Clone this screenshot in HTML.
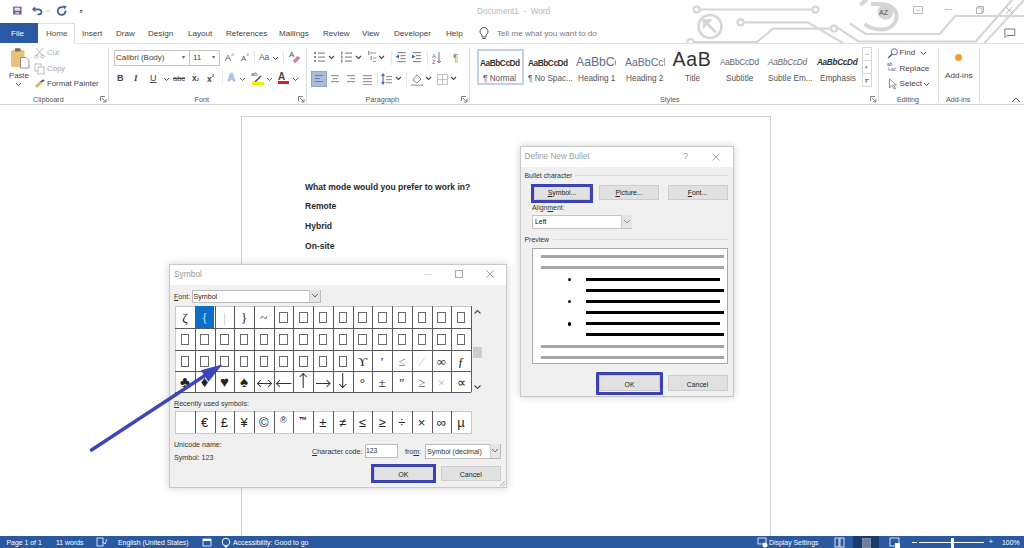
<!DOCTYPE html>
<html><head><meta charset="utf-8">
<style>
*{margin:0;padding:0;box-sizing:border-box}
html,body{width:1024px;height:548px;overflow:hidden;background:#fff;font-family:"Liberation Sans",sans-serif;color:#444}
.a{position:absolute}
.t{position:absolute;white-space:nowrap;line-height:1}
#title{left:0;top:0;width:1024px;height:43px;background:#fff}
#ribbon{left:0;top:43px;width:1024px;height:62px;background:#fff;border-top:1px solid #e1e1e1;border-bottom:1px solid #d6d6d6}
.tab{font-size:8.1px;color:#444;top:29.6px}
.sep{position:absolute;top:48px;width:1px;height:54px;background:#dcdcdc}
.gl{font-size:7.2px;color:#555;top:95.5px}
.status{left:0;top:536px;width:1024px;height:12px;background:#2b59a0}
.st{font-size:6.9px;color:#fff;top:540.2px}
.dlg{position:absolute;background:#f0f0f0;border:1px solid #c9c9c9;box-shadow:0 0 8px rgba(0,0,0,.18)}
.dtitle{position:absolute;left:0;top:0;right:0;background:#fff}
.btn{position:absolute;background:#e1e1e1;border:1px solid #cdcdcd;font-size:7.4px;color:#222;text-align:center}
.hl{position:absolute;border:3px solid #3b43b5}
.grid{position:absolute;border-collapse:collapse;background:#fff}
.grid td{border:1px solid #555;width:19.73px;text-align:center;font-family:"Liberation Serif",serif;color:#111;padding:0}
</style></head><body>

<!-- TITLE BAR -->
<div id="title" class="a">
<svg class="a" style="left:0;top:0" width="1024" height="43">
 <g fill="none" stroke="#d6d6d6" stroke-width="2.2">
  <line x1="700" y1="9.5" x2="812" y2="9.5"/>
  <circle cx="696.7" cy="9.5" r="3" fill="#fff"/>
  <circle cx="815.4" cy="9.7" r="3" fill="#fff"/>
  <circle cx="710" cy="26.5" r="11.5" stroke-width="2.6"/>
  <path d="M704 20.5 L716 32.5" stroke-width="2.6"/>
  <path d="M703.5 27.5 L703.5 20 L711 20 Z" fill="#d6d6d6" stroke-width="1.5"/>
  <path d="M744 22.4 L807.6 22.4 L843 43"/>
  <circle cx="740.5" cy="22.4" r="3" fill="#fff"/>
  <path d="M693.5 42 L757 42 L773 28.6 L831 28.6"/>
  <circle cx="690.5" cy="42" r="3" fill="#fff"/>
  <path d="M837 28.6 L839 28.6 L858.5 41.5 L975.8 41.5 L1012 0"/>
  <path d="M984.5 43 L1024 0"/>
  <path d="M849.8 23.5 L865.6 34 L939.6 34 L955.3 16 L1024 16"/>
  <path d="M871 4 L880 4 C890 4, 896.5 9, 896.5 16 C 896.5 24, 890 29.5, 881 29.5 C 875 29.5, 869 27.5, 864.5 24" stroke-width="4"/>
  <path d="M860.3 5 L867.3 -1" stroke-width="4"/>
 </g>
 <circle cx="834" cy="28.6" r="3" fill="#fff" stroke="#d6d6d6" stroke-width="2.2"/>
 <circle cx="885.5" cy="12" r="7.8" fill="#d4d4d4"/>
</svg>
<div class="t" style="left:879px;top:8.5px;font-size:7.2px;color:#555">AZ</div>
<div class="t" style="left:477px;top:8px;font-size:8.2px;color:#b8b8b8">Document1 &nbsp;-&nbsp; Word</div>
<!-- qat -->
<svg class="a" style="left:0;top:0" width="90" height="22">
 <rect x="13.2" y="6.6" width="8.3" height="7.9" fill="#6d5480"/>
 <rect x="14.6" y="7.6" width="5.6" height="3.2" fill="#e8e0ee"/>
 <rect x="15.2" y="12.2" width="4" height="1.4" fill="#e8e0ee"/>
 <path d="M33.5 9.3 L38 9.3 C40.6 9.3 41.5 11 41.5 12 C41.5 13.4 40.5 14.4 39 14.4 L37.5 14.4" fill="none" stroke="#46628a" stroke-width="1.7"/>
 <path d="M32 9.3 L35.3 6.3 L35.3 12.3 Z" fill="#46628a"/>
 <path d="M46 10 L48 11.5 L50 10" fill="none" stroke="#c8c8c8" stroke-width="0.9"/>
 <path d="M63.5 7.6 A3.9 3.9 0 1 0 65.5 10.5" fill="none" stroke="#46628a" stroke-width="1.8"/>
 <path d="M62.5 5.6 L66.5 6 L64.8 9.6 Z" fill="#46628a"/>
 <rect x="79.8" y="10" width="2.6" height="0.9" fill="#444"/>
 <rect x="79.8" y="11.6" width="2.6" height="0.9" fill="#444"/>
</svg>
<!-- window controls -->
<svg class="a" style="left:900px;top:0" width="124" height="43">
 <rect x="13.5" y="6.5" width="9" height="7" fill="none" stroke="#bbb" stroke-width="1"/>
 <path d="M16 9.5 L18 11 L20 9.5" fill="none" stroke="#bbb" stroke-width="0.9"/>
 <line x1="45" y1="9.5" x2="52.5" y2="9.5" stroke="#c8c8c8" stroke-width="1"/>
 <rect x="76.5" y="8" width="5.5" height="5.5" fill="none" stroke="#aaa" stroke-width="0.9"/>
 <path d="M78 8 L78 6.5 L83.5 6.5 L83.5 12 L82 12" fill="none" stroke="#aaa" stroke-width="0.9"/>
 <path d="M106 7 L112.5 13.5 M112.5 7 L106 13.5" stroke="#aaa" stroke-width="0.9"/>
 <path d="M104.8 29 L114.8 29 L114.8 35.5 L107 35.5 L105 37.5 Z" fill="none" stroke="#777" stroke-width="1"/>
</svg>
<!-- tabs -->
<div class="a" style="left:0;top:23px;width:38px;height:19.5px;background:#2b59a3"></div>
<div class="t tab" style="left:11px;color:#fff">File</div>
<div class="a" style="left:38px;top:23px;width:37px;height:21px;background:#fff;border:1px solid #e0e0e0;border-left:none;border-bottom:none"></div>
<div class="t tab" style="left:46px;color:#505050">Home</div>
<div class="t tab" style="left:82px">Insert</div>
<div class="t tab" style="left:116px">Draw</div>
<div class="t tab" style="left:148px">Design</div>
<div class="t tab" style="left:188px">Layout</div>
<div class="t tab" style="left:226px">References</div>
<div class="t tab" style="left:279px">Mailings</div>
<div class="t tab" style="left:323px">Review</div>
<div class="t tab" style="left:362px">View</div>
<div class="t tab" style="left:394px">Developer</div>
<div class="t tab" style="left:446px">Help</div>
<svg class="a" style="left:479px;top:26px" width="12" height="14"><path d="M3 9 A4 4 0 1 1 7 9 L7 11 L3 11 Z" fill="none" stroke="#555" stroke-width="1"/><line x1="3.5" y1="12.5" x2="6.5" y2="12.5" stroke="#555"/></svg>
<div class="t tab" style="left:497px;color:#777">Tell me what you want to do</div>
</div>

<!-- RIBBON -->
<div id="ribbon" class="a"></div>

<!-- RIBBON CONTENT -->
<div class="a" style="left:0;top:43px;width:74px;height:1px;background:#fff"></div>
<!-- Clipboard -->
<svg class="a" style="left:8px;top:47px" width="24" height="24">
 <rect x="3" y="3" width="13.5" height="17" rx="1" fill="#e9c27a"/>
 <rect x="7" y="1.3" width="5.5" height="3.2" rx="1" fill="#7a6a5a"/>
 <path d="M12.5 10.5 L18 10.5 L21 13.5 L21 21 L12.5 21 Z" fill="#fff" stroke="#888" stroke-width="0.9"/>
</svg>
<div class="t" style="left:9px;top:71.5px;font-size:7.7px;color:#444">Paste</div>
<svg class="a" style="left:15px;top:82px" width="8" height="5"><path d="M1 1 L3.5 3.5 L6 1" fill="none" stroke="#555" stroke-width="1"/></svg>
<svg class="a" style="left:34px;top:47px" width="12" height="12"><path d="M2 1 L9 9 M9 1 L2 9" stroke="#bbb" stroke-width="1"/><circle cx="2.5" cy="9.5" r="1.6" fill="none" stroke="#bbb"/><circle cx="8.5" cy="9.5" r="1.6" fill="none" stroke="#bbb"/></svg>
<div class="t" style="left:47px;top:49.3px;font-size:7.8px;color:#aaa">Cut</div>
<svg class="a" style="left:34px;top:63px" width="12" height="12"><rect x="1" y="1" width="6" height="7" fill="none" stroke="#bbb"/><rect x="4" y="4" width="6" height="7" fill="#fff" stroke="#bbb"/></svg>
<div class="t" style="left:47px;top:65.3px;font-size:7.8px;color:#aaa">Copy</div>
<svg class="a" style="left:35px;top:79px" width="11" height="10"><path d="M1 8 L6 3" stroke="#d8b56a" stroke-width="3"/><path d="M6 3 L9 1" stroke="#555" stroke-width="2"/></svg>
<div class="t" style="left:47px;top:80.3px;font-size:7.8px;color:#444">Format Painter</div>
<div class="t gl" style="left:33px">Clipboard</div>
<svg class="a" style="left:100px;top:96px" width="7" height="7"><path d="M0.5 5 L0.5 0.5 L5 0.5 M2 2 L6 6 M6 3 L6 6 L3 6" fill="none" stroke="#777" stroke-width="0.9"/></svg>
<div class="sep" style="left:108px"></div>

<!-- Font -->
<div class="a" style="left:114px;top:50px;width:76px;height:16px;border:1px solid #c6c6c6;background:#fff"></div>
<div class="t" style="left:116px;top:54.2px;font-size:8px;color:#444">Calibri (Body)</div>
<div class="t" style="left:182px;top:54px;font-size:6px;color:#666">▾</div>
<div class="a" style="left:189px;top:50px;width:31px;height:16px;border:1px solid #c6c6c6;background:#fff"></div>
<div class="t" style="left:193px;top:54.2px;font-size:8px;color:#444">11</div>
<div class="t" style="left:212px;top:54px;font-size:6px;color:#666">▾</div>
<div class="t" style="left:225px;top:53px;font-size:9px;color:#555">A<span style="font-size:5px;vertical-align:4px">˄</span></div>
<div class="t" style="left:241px;top:53px;font-size:8px;color:#555">A<span style="font-size:5px;vertical-align:4px">˅</span></div>
<div class="t" style="left:259px;top:53px;font-size:8.4px;color:#555">Aa</div>
<svg class="a" style="left:272px;top:56px" width="7" height="5"><path d="M1 1 L3.5 3.5 L6 1" fill="none" stroke="#555" stroke-width="1"/></svg>
<div class="t" style="left:289px;top:51px;font-size:8px;color:#555">A</div>
<svg class="a" style="left:292px;top:55px" width="10" height="9"><path d="M2 7 L7 2" stroke="#e07a9a" stroke-width="3.5"/></svg>
<div class="t" style="left:117px;top:73.5px;font-size:9px;font-weight:bold;color:#444">B</div>
<div class="t" style="left:134px;top:73.5px;font-size:9px;font-style:italic;font-weight:bold;color:#444;font-family:'Liberation Serif',serif">I</div>
<div class="t" style="left:150px;top:73.5px;font-size:9px;color:#444;text-decoration:underline">U</div>
<svg class="a" style="left:163px;top:77px" width="7" height="5"><path d="M1 1 L3.5 3.5 L6 1" fill="none" stroke="#555" stroke-width="1"/></svg>
<div class="t" style="left:173px;top:75px;font-size:7.5px;color:#444;text-decoration:line-through">abc</div>
<div class="t" style="left:192px;top:74px;font-size:8.5px;font-weight:bold;color:#444">x<span style="font-size:4px">2</span></div>
<div class="t" style="left:207px;top:74px;font-size:8.5px;font-weight:bold;color:#444">x<span style="font-size:4px;vertical-align:5px">2</span></div>
<div class="a" style="left:221.5px;top:71px;width:1px;height:14px;background:#eeeeee"></div><div class="a" style="left:254px;top:51px;width:1px;height:14px;background:#e6e6e6"></div><div class="a" style="left:283px;top:51px;width:1px;height:14px;background:#e6e6e6"></div>
<div class="t" style="left:227.5px;top:72px;font-size:10.5px;color:#e4eef8;-webkit-text-stroke:0.7px #7aa6d6;font-weight:bold">A</div>
<svg class="a" style="left:239px;top:77px" width="7" height="5"><path d="M1 1 L3.5 3.5 L6 1" fill="none" stroke="#555" stroke-width="1"/></svg>
<div class="t" style="left:251px;top:71px;font-size:6px;color:#555">ab</div>
<svg class="a" style="left:251px;top:74px" width="14" height="12"><path d="M4 8 L10 2" stroke="#555" stroke-width="1.6"/><rect x="1" y="8" width="12" height="3" fill="#f2f200"/></svg>
<svg class="a" style="left:266px;top:77px" width="7" height="5"><path d="M1 1 L3.5 3.5 L6 1" fill="none" stroke="#555" stroke-width="1"/></svg>
<div class="t" style="left:278px;top:72px;font-size:10px;color:#444;font-weight:bold">A</div>
<div class="a" style="left:278px;top:81px;width:11px;height:2.5px;background:#d42020"></div>
<svg class="a" style="left:292px;top:77px" width="7" height="5"><path d="M1 1 L3.5 3.5 L6 1" fill="none" stroke="#555" stroke-width="1"/></svg>
<div class="t gl" style="left:194.5px">Font</div>
<svg class="a" style="left:298px;top:96px" width="7" height="7"><path d="M0.5 5 L0.5 0.5 L5 0.5 M2 2 L6 6 M6 3 L6 6 L3 6" fill="none" stroke="#777" stroke-width="0.9"/></svg>
<div class="sep" style="left:306px"></div>

<!-- Paragraph -->
<svg class="a" style="left:312px;top:50px" width="160" height="40">
 <g fill="#8a8a8a">
  <rect x="2" y="2" width="2" height="2"/><rect x="2" y="6" width="2" height="2"/><rect x="2" y="10" width="2" height="2"/>
  <rect x="6" y="2.5" width="7" height="1.2"/><rect x="6" y="6.5" width="7" height="1.2"/><rect x="6" y="10.5" width="7" height="1.2"/>
 </g>
 <path d="M17 6 L19.5 8.5 L22 6" fill="none" stroke="#444" stroke-width="1.1"/>
 <g fill="#8a8a8a">
  <rect x="29" y="1.5" width="1.5" height="3"/><rect x="29" y="5.5" width="1.5" height="3"/><rect x="29" y="9.5" width="1.5" height="3"/>
  <rect x="33" y="2.5" width="7" height="1.2"/><rect x="33" y="6.5" width="7" height="1.2"/><rect x="33" y="10.5" width="7" height="1.2"/>
 </g>
 <path d="M44 6 L46.5 8.5 L49 6" fill="none" stroke="#444" stroke-width="1.1"/>
 <g fill="#999">
  <rect x="56" y="1" width="1.3" height="4"/><rect x="58" y="2.5" width="6" height="1"/><rect x="58.5" y="6" width="1.3" height="4"/><rect x="61" y="7.5" width="3.5" height="1"/><rect x="61" y="11" width="3" height="1"/>
 </g>
 <path d="M67 6 L69.5 8.5 L72 6" fill="none" stroke="#444" stroke-width="1.1"/>
 <g fill="#8a8a8a"><rect x="85.5" y="2" width="8" height="1.2"/><rect x="88.5" y="5" width="5" height="1.2"/><rect x="88.5" y="8" width="5" height="1.2"/><rect x="85.5" y="11" width="8" height="1.2"/></g>
 <path d="M83.5 6.5 L87 4.5 L87 8.5 Z" fill="#3f6aa6"/>
 <g fill="#8a8a8a"><rect x="101" y="2" width="8" height="1.2"/><rect x="104" y="5" width="5" height="1.2"/><rect x="104" y="8" width="5" height="1.2"/><rect x="101" y="11" width="8" height="1.2"/></g>
 <path d="M103.5 6.5 L100 4.5 L100 8.5 Z" fill="#3f6aa6"/>
 <text x="120" y="8" font-size="5.5" fill="#3f6aa6" font-family="Liberation Sans">A</text>
 <text x="120" y="14" font-size="5.5" fill="#a04a9a" font-family="Liberation Sans">Z</text>
 <path d="M127 2 L127 13 M125 11 L127 13 L129 11" fill="none" stroke="#666" stroke-width="0.9"/>
 <text x="141" y="12" font-size="10" fill="#888" font-family="Liberation Sans">¶</text>
</svg>
<div class="a" style="left:311px;top:71px;width:16px;height:16px;background:#aabcd8;border:1px solid #8fa4c6"></div>
<svg class="a" style="left:311px;top:71px" width="160" height="18">
 <g fill="#6b7fa6"><rect x="4" y="4" width="8" height="1"/><rect x="4" y="7" width="5" height="1"/><rect x="4" y="10" width="8" height="1"/></g>
 <g fill="#999"><rect x="20" y="4" width="8" height="1.2"/><rect x="21.5" y="7" width="5" height="1.2"/><rect x="20" y="10" width="8" height="1.2"/></g>
 <g fill="#999"><rect x="36" y="4" width="8" height="1.2"/><rect x="39" y="7" width="5" height="1.2"/><rect x="36" y="10" width="8" height="1.2"/></g>
 <g fill="#999"><rect x="52" y="4" width="9" height="1.2"/><rect x="52" y="7" width="9" height="1.2"/><rect x="52" y="10" width="9" height="1.2"/><rect x="52" y="13" width="9" height="1"/></g>
 <g fill="#999"><rect x="75" y="5" width="6" height="1.2"/><rect x="75" y="8" width="6" height="1.2"/><rect x="75" y="11" width="6" height="1.2"/></g>
 <path d="M72 3 L72 13 M70.5 5 L72 3 L73.5 5 M70.5 11 L72 13 L73.5 11" fill="none" stroke="#3f6aa6" stroke-width="1.1"/>
 <path d="M85 6 L87.5 8.5 L90 6" fill="none" stroke="#444" stroke-width="1.1"/>
 <path d="M102 9 L106 4 L110 8 L106 12 Z" fill="none" stroke="#777" stroke-width="0.9"/>
 <rect x="100" y="13.5" width="12" height="1.3" fill="#aaa"/>
 <path d="M115 6 L117.5 8.5 L120 6" fill="none" stroke="#444" stroke-width="1.1"/>
 <rect x="126.5" y="3.5" width="10" height="10" fill="none" stroke="#bbb" stroke-width="0.9"/>
 <path d="M131.5 3.5 L131.5 13.5 M126.5 8.5 L136.5 8.5" stroke="#bbb" stroke-width="0.9"/>
 <path d="M140 6 L142.5 8.5 L145 6" fill="none" stroke="#444" stroke-width="1.1"/>
</svg>
<div class="a" style="left:391px;top:51px;width:1px;height:14px;background:#e6e6e6"></div>
<div class="a" style="left:426.5px;top:51px;width:1px;height:14px;background:#e6e6e6"></div>
<div class="a" style="left:377px;top:72px;width:1px;height:14px;background:#e6e6e6"></div>
<div class="a" style="left:405.5px;top:72px;width:1px;height:14px;background:#e6e6e6"></div>
<div class="t gl" style="left:365.5px">Paragraph</div>
<svg class="a" style="left:461px;top:96px" width="7" height="7"><path d="M0.5 5 L0.5 0.5 L5 0.5 M2 2 L6 6 M6 3 L6 6 L3 6" fill="none" stroke="#777" stroke-width="0.9"/></svg>
<div class="sep" style="left:469px"></div>

<!-- Styles -->
<div class="a" style="left:476.5px;top:48.5px;width:47px;height:36px;border:2px solid #c3d1e7;background:#fff"></div>
<div class="t" style="left:480px;top:58.5px;font-size:8.3px;color:#333;font-weight:bold;letter-spacing:-0.45px">AaBbCcDd</div>
<div class="t" style="left:483px;top:74.5px;font-size:8.2px;color:#555">¶ Normal</div>
<div class="t" style="left:528px;top:58.5px;font-size:8.3px;color:#333;font-weight:bold;letter-spacing:-0.45px">AaBbCcDd</div>
<div class="t" style="left:528px;top:74.5px;font-size:8.2px;color:#555">¶ No Spac...</div>
<div class="t" style="left:576px;top:56px;font-size:12.2px;color:#5a6f95;width:40px;overflow:hidden">AaBbCc</div>
<div class="t" style="left:578px;top:74.5px;font-size:8.2px;color:#555">Heading 1</div>
<div class="t" style="left:625px;top:56.5px;font-size:10.5px;color:#5a6f95;width:40px;overflow:hidden">AaBbCcD</div>
<div class="t" style="left:626px;top:74.5px;font-size:8.2px;color:#555">Heading 2</div>
<div class="a" style="left:668px;top:52.3px;width:50px;height:16px;overflow:hidden"><div class="t" style="left:4.5px;top:-2.3px;font-size:19.5px;color:#333;letter-spacing:0.7px">AaB</div></div>
<div class="t" style="left:685px;top:74.5px;font-size:8.2px;color:#555">Title</div>
<div class="t" style="left:720px;top:58.5px;font-size:8.2px;color:#666;letter-spacing:-0.2px">AaBbCcDd</div>
<div class="t" style="left:726px;top:74.5px;font-size:8.2px;color:#555">Subtitle</div>
<div class="t" style="left:768px;top:58.5px;font-size:8.2px;color:#666;font-style:italic;letter-spacing:-0.2px">AaBbCcDd</div>
<div class="t" style="left:768px;top:74.5px;font-size:8.2px;color:#555">Subtle Em...</div>
<div class="t" style="left:817px;top:58.5px;font-size:8.2px;color:#333;font-style:italic;font-weight:bold;letter-spacing:-0.3px">AaBbCcDd</div>
<div class="t" style="left:820px;top:74.5px;font-size:8.2px;color:#555">Emphasis</div>
<div class="a" style="left:862px;top:47px;width:10px;height:40px;border:1px solid #d8d8d8;background:#fff"></div>
<div class="a" style="left:862px;top:60px;width:10px;height:1px;background:#d8d8d8"></div>
<div class="a" style="left:862px;top:73px;width:10px;height:1px;background:#d8d8d8"></div>
<div class="a" style="left:865px;top:53.5px;width:4px;height:1px;background:#ccc"></div><div class="t" style="left:865px;top:65px;font-size:5px;color:#777">▾</div>
<div class="a" style="left:865px;top:78.5px;width:4px;height:1px;background:#888"></div><div class="t" style="left:865px;top:79px;font-size:5px;color:#777">▾</div>
<div class="t gl" style="left:660px">Styles</div>
<svg class="a" style="left:870px;top:96px" width="7" height="7"><path d="M0.5 5 L0.5 0.5 L5 0.5 M2 2 L6 6 M6 3 L6 6 L3 6" fill="none" stroke="#777" stroke-width="0.9"/></svg>
<div class="sep" style="left:878px"></div>

<!-- Editing -->
<svg class="a" style="left:886px;top:47px" width="14" height="12"><circle cx="8.3" cy="4.8" r="3.1" fill="none" stroke="#4a78b0" stroke-width="1"/><path d="M6 7.2 L2.3 10.8" stroke="#555" stroke-width="1.3"/></svg>
<div class="t" style="left:899.5px;top:49px;font-size:8.1px;color:#444">Find</div>
<svg class="a" style="left:920px;top:51px" width="7" height="5"><path d="M1 1 L3.5 3.5 L6 1" fill="none" stroke="#555" stroke-width="1"/></svg>
<div class="t" style="left:887px;top:62px;font-size:5px;color:#555">ab</div>
<div class="t" style="left:887px;top:67px;font-size:5px;color:#3f6aa6">↳ac</div>
<div class="t" style="left:899.5px;top:64.5px;font-size:8.1px;color:#444">Replace</div>
<svg class="a" style="left:888px;top:78px" width="10" height="12"><path d="M1.5 1 L1.5 10 L4 7.5 L6 11 L7.5 10.5 L5.5 7 L8.5 7 Z" fill="#fff" stroke="#777" stroke-width="0.8"/></svg>
<div class="t" style="left:899.5px;top:80px;font-size:8.1px;color:#444">Select</div>
<svg class="a" style="left:922.5px;top:82px" width="7" height="5"><path d="M1 1 L3.5 3.5 L6 1" fill="none" stroke="#555" stroke-width="1"/></svg>
<div class="t gl" style="left:897px">Editing</div>
<div class="sep" style="left:938px"></div>

<!-- Add-ins -->
<div class="a" style="left:954.5px;top:53.5px;width:7px;height:7px;border-radius:50%;background:#f0a030"></div>
<div class="t" style="left:945px;top:71.5px;font-size:8.1px;color:#444">Add-ins</div>
<div class="t gl" style="left:946px">Add-ins</div>
<div class="sep" style="left:979px"></div>
<svg class="a" style="left:1011px;top:97px" width="10" height="6"><path d="M1 5 L5 1 L9 5" fill="none" stroke="#555" stroke-width="1"/></svg>

<!-- DOCUMENT -->
<div class="a" style="left:241px;top:116px;width:530px;height:440px;border:1px solid #cfcfcf;background:#fff"></div>
<div class="t" style="left:305px;top:182.5px;font-size:8.55px;color:#2a2a2a;font-weight:bold">What mode would you prefer to work in?</div>
<div class="t" style="left:305px;top:202.4px;font-size:8.55px;color:#2a2a2a;font-weight:bold">Remote</div>
<div class="t" style="left:305px;top:222.4px;font-size:8.55px;color:#2a2a2a;font-weight:bold">Hybrid</div>
<div class="t" style="left:305px;top:242.4px;font-size:8.55px;color:#2a2a2a;font-weight:bold">On-site</div>


<!-- SYMBOL DIALOG -->
<div class="dlg" style="left:168.5px;top:263.5px;width:338px;height:224px"></div>
<div class="a" style="left:169.5px;top:264.5px;width:336px;height:20px;background:#fff"></div>
<div class="t" style="left:174px;top:269.5px;font-size:8.4px;color:#999">Symbol</div>
<div class="a" style="left:424px;top:274px;width:8px;height:1px;background:#e0e0e0"></div>
<div class="a" style="left:454.5px;top:270px;width:8px;height:8px;border:1px solid #aaa"></div>
<svg class="a" style="left:485px;top:269px" width="10" height="10"><path d="M1 1 L9 9 M9 1 L1 9" stroke="#aaa" stroke-width="1"/></svg>
<div class="t" style="left:174px;top:293.8px;font-size:7.1px;color:#333"><u>F</u>ont:</div>
<div class="a" style="left:191.5px;top:289.5px;width:129px;height:13px;background:#fff;border:1px solid #bbb"></div>
<div class="a" style="left:309px;top:290px;width:11px;height:12px;background:#e5e5e5;border-left:1px solid #ccc"></div>
<svg class="a" style="left:311px;top:293px" width="8" height="6"><path d="M1 1 L4 4 L7 1" fill="none" stroke="#666" stroke-width="0.9"/></svg>
<div class="t" style="left:193.5px;top:293.8px;font-size:7.1px;color:#222">Symbol</div>
<div class="a" style="left:174.5px;top:305.5px;width:297px;height:87px;background:#fff;border:1px solid #c8c8c8"></div>
<div class="t" style="left:175.0px;width:19.7px;text-align:center;top:311.0px;font-size:13px;font-family:'Liberation Serif',serif;color:#222">ζ</div>
<div class="a" style="left:194.7px;top:306px;width:19.7px;height:22px;background:#0b6fc9"></div><div class="t" style="left:194.7px;width:19.7px;text-align:center;top:311.0px;font-size:13px;font-family:'Liberation Serif',serif;color:#cfe3f7">{</div>
<div class="t" style="left:214.5px;width:19.7px;text-align:center;top:311.0px;font-size:13px;font-family:'Liberation Serif',serif;color:#bbb">|</div>
<div class="t" style="left:234.2px;width:19.7px;text-align:center;top:311.0px;font-size:13px;font-family:'Liberation Serif',serif;color:#222">}</div>
<div class="t" style="left:253.9px;width:19.7px;text-align:center;top:311.0px;font-size:13px;font-family:'Liberation Serif',serif;color:#222">~</div>
<div class="a" style="left:279.3px;top:312.0px;width:8.5px;height:10.8px;border:1px solid #6a6a6a"></div>
<div class="a" style="left:299.1px;top:312.0px;width:8.5px;height:10.8px;border:1px solid #6a6a6a"></div>
<div class="a" style="left:318.8px;top:312.0px;width:8.5px;height:10.8px;border:1px solid #6a6a6a"></div>
<div class="a" style="left:338.5px;top:312.0px;width:8.5px;height:10.8px;border:1px solid #6a6a6a"></div>
<div class="a" style="left:358.3px;top:312.0px;width:8.5px;height:10.8px;border:1px solid #6a6a6a"></div>
<div class="a" style="left:378.0px;top:312.0px;width:8.5px;height:10.8px;border:1px solid #6a6a6a"></div>
<div class="a" style="left:397.7px;top:312.0px;width:8.5px;height:10.8px;border:1px solid #6a6a6a"></div>
<div class="a" style="left:417.5px;top:312.0px;width:8.5px;height:10.8px;border:1px solid #6a6a6a"></div>
<div class="a" style="left:437.2px;top:312.0px;width:8.5px;height:10.8px;border:1px solid #6a6a6a"></div>
<div class="a" style="left:456.9px;top:312.0px;width:8.5px;height:10.8px;border:1px solid #6a6a6a"></div>
<div class="a" style="left:180.7px;top:334.0px;width:8.5px;height:10.8px;border:1px solid #6a6a6a"></div>
<div class="a" style="left:200.4px;top:334.0px;width:8.5px;height:10.8px;border:1px solid #6a6a6a"></div>
<div class="a" style="left:220.2px;top:334.0px;width:8.5px;height:10.8px;border:1px solid #6a6a6a"></div>
<div class="a" style="left:239.9px;top:334.0px;width:8.5px;height:10.8px;border:1px solid #6a6a6a"></div>
<div class="a" style="left:259.6px;top:334.0px;width:8.5px;height:10.8px;border:1px solid #6a6a6a"></div>
<div class="a" style="left:279.3px;top:334.0px;width:8.5px;height:10.8px;border:1px solid #6a6a6a"></div>
<div class="a" style="left:299.1px;top:334.0px;width:8.5px;height:10.8px;border:1px solid #6a6a6a"></div>
<div class="a" style="left:318.8px;top:334.0px;width:8.5px;height:10.8px;border:1px solid #6a6a6a"></div>
<div class="a" style="left:338.5px;top:334.0px;width:8.5px;height:10.8px;border:1px solid #6a6a6a"></div>
<div class="a" style="left:358.3px;top:334.0px;width:8.5px;height:10.8px;border:1px solid #6a6a6a"></div>
<div class="a" style="left:378.0px;top:334.0px;width:8.5px;height:10.8px;border:1px solid #6a6a6a"></div>
<div class="a" style="left:397.7px;top:334.0px;width:8.5px;height:10.8px;border:1px solid #6a6a6a"></div>
<div class="a" style="left:417.5px;top:334.0px;width:8.5px;height:10.8px;border:1px solid #6a6a6a"></div>
<div class="a" style="left:437.2px;top:334.0px;width:8.5px;height:10.8px;border:1px solid #6a6a6a"></div>
<div class="a" style="left:456.9px;top:334.0px;width:8.5px;height:10.8px;border:1px solid #6a6a6a"></div>
<div class="a" style="left:180.7px;top:356.0px;width:8.5px;height:10.8px;border:1px solid #6a6a6a"></div>
<div class="a" style="left:200.4px;top:356.0px;width:8.5px;height:10.8px;border:1px solid #6a6a6a"></div>
<div class="a" style="left:220.2px;top:356.0px;width:8.5px;height:10.8px;border:1px solid #6a6a6a"></div>
<div class="a" style="left:239.9px;top:356.0px;width:8.5px;height:10.8px;border:1px solid #6a6a6a"></div>
<div class="a" style="left:259.6px;top:356.0px;width:8.5px;height:10.8px;border:1px solid #6a6a6a"></div>
<div class="a" style="left:279.3px;top:356.0px;width:8.5px;height:10.8px;border:1px solid #6a6a6a"></div>
<div class="a" style="left:299.1px;top:356.0px;width:8.5px;height:10.8px;border:1px solid #6a6a6a"></div>
<div class="a" style="left:318.8px;top:356.0px;width:8.5px;height:10.8px;border:1px solid #6a6a6a"></div>
<div class="a" style="left:338.5px;top:356.0px;width:8.5px;height:10.8px;border:1px solid #6a6a6a"></div>
<div class="t" style="left:352.6px;width:19.7px;text-align:center;top:355.0px;font-size:13px;font-family:'Liberation Serif',serif;color:#222">ϒ</div>
<div class="t" style="left:372.3px;width:19.7px;text-align:center;top:355.0px;font-size:13px;font-family:'Liberation Serif',serif;color:#222">′</div>
<div class="t" style="left:392.0px;width:19.7px;text-align:center;top:355.0px;font-size:13px;font-family:'Liberation Serif',serif;color:#888">≤</div>
<div class="t" style="left:411.8px;width:19.7px;text-align:center;top:355.0px;font-size:13px;font-family:'Liberation Serif',serif;color:#bbb">⁄</div>
<div class="t" style="left:431.5px;width:19.7px;text-align:center;top:355.0px;font-size:13px;font-family:'Liberation Serif',serif;color:#222">∞</div>
<div class="t" style="left:451.2px;width:19.7px;text-align:center;top:355.0px;font-size:13px;font-family:'Liberation Serif',serif;color:#222">ƒ</div>
<div class="t" style="left:175.0px;width:19.7px;text-align:center;top:374.5px;font-size:15px;font-family:'Liberation Serif',serif;color:#222">♣</div>
<div class="t" style="left:194.7px;width:19.7px;text-align:center;top:374.5px;font-size:15px;font-family:'Liberation Serif',serif;color:#222">♦</div>
<div class="t" style="left:214.5px;width:19.7px;text-align:center;top:374.5px;font-size:15px;font-family:'Liberation Serif',serif;color:#222">♥</div>
<div class="t" style="left:234.2px;width:19.7px;text-align:center;top:374.5px;font-size:15px;font-family:'Liberation Serif',serif;color:#222">♠</div>
<div class="t" style="left:352.6px;width:19.7px;text-align:center;top:376.0px;font-size:13px;font-family:'Liberation Serif',serif;color:#222">°</div>
<div class="t" style="left:372.3px;width:19.7px;text-align:center;top:376.0px;font-size:13px;font-family:'Liberation Serif',serif;color:#222">±</div>
<div class="t" style="left:392.0px;width:19.7px;text-align:center;top:376.0px;font-size:13px;font-family:'Liberation Serif',serif;color:#222">″</div>
<div class="t" style="left:411.8px;width:19.7px;text-align:center;top:376.0px;font-size:13px;font-family:'Liberation Serif',serif;color:#666">≥</div>
<div class="t" style="left:431.5px;width:19.7px;text-align:center;top:376.0px;font-size:13px;font-family:'Liberation Serif',serif;color:#bbb">×</div>
<div class="t" style="left:451.2px;width:19.7px;text-align:center;top:376.0px;font-size:13px;font-family:'Liberation Serif',serif;color:#222">∝</div>

<div class="a" style="left:194.7px;top:306px;width:1px;height:86px;background:#5a5a5a"></div>
<div class="a" style="left:214.5px;top:306px;width:1px;height:86px;background:#5a5a5a"></div>
<div class="a" style="left:234.2px;top:306px;width:1px;height:86px;background:#5a5a5a"></div>
<div class="a" style="left:253.9px;top:306px;width:1px;height:86px;background:#5a5a5a"></div>
<div class="a" style="left:273.6px;top:306px;width:1px;height:86px;background:#5a5a5a"></div>
<div class="a" style="left:293.4px;top:306px;width:1px;height:86px;background:#5a5a5a"></div>
<div class="a" style="left:313.1px;top:306px;width:1px;height:86px;background:#5a5a5a"></div>
<div class="a" style="left:332.8px;top:306px;width:1px;height:86px;background:#5a5a5a"></div>
<div class="a" style="left:352.6px;top:306px;width:1px;height:86px;background:#5a5a5a"></div>
<div class="a" style="left:372.3px;top:306px;width:1px;height:86px;background:#5a5a5a"></div>
<div class="a" style="left:392.0px;top:306px;width:1px;height:86px;background:#5a5a5a"></div>
<div class="a" style="left:411.8px;top:306px;width:1px;height:86px;background:#5a5a5a"></div>
<div class="a" style="left:431.5px;top:306px;width:1px;height:86px;background:#5a5a5a"></div>
<div class="a" style="left:451.2px;top:306px;width:1px;height:86px;background:#5a5a5a"></div>
<div class="a" style="left:470.9px;top:306px;width:1px;height:86px;background:#5a5a5a"></div>
<div class="a" style="left:175px;top:328px;width:296px;height:1px;background:#5a5a5a"></div>
<div class="a" style="left:175px;top:350px;width:296px;height:1px;background:#5a5a5a"></div>
<div class="a" style="left:175px;top:371px;width:296px;height:1px;background:#5a5a5a"></div>
<div class="a" style="left:175px;top:392px;width:296px;height:1px;background:#5a5a5a"></div>

<svg class="a" style="left:250px;top:370px" width="100" height="22">
 <g fill="none" stroke="#333" stroke-width="1.05" stroke-linejoin="miter">
  <path d="M7.5 13.5 L21.5 13.5 M11 10 L7.5 13.5 L11 17 M18 10 L21.5 13.5 L18 17"/>
  <path d="M26.5 13.5 L41.5 13.5 M30 10 L26.5 13.5 L30 17"/>
  <path d="M53.2 3.5 L53.2 18 M49.7 7 L53.2 3.5 L56.7 7"/>
  <path d="M66 13.5 L80 13.5 M76.5 10 L80 13.5 L76.5 17"/>
  <path d="M92.7 3 L92.7 17.5 M89.2 14 L92.7 17.5 L96.2 14"/>
 </g>
</svg>
<svg class="a" style="left:473px;top:309px" width="9" height="6"><path d="M1.5 4.5 L4.5 1.5 L7.5 4.5" fill="none" stroke="#444" stroke-width="1.1"/></svg>
<div class="a" style="left:472.5px;top:346.5px;width:9px;height:11px;background:#cdcdcd"></div>
<svg class="a" style="left:473px;top:384px" width="9" height="6"><path d="M1.5 1.5 L4.5 4.5 L7.5 1.5" fill="none" stroke="#444" stroke-width="1.1"/></svg>
<div class="t" style="left:174px;top:401.2px;font-size:7.1px;color:#333"><u>R</u>ecently used symbols:</div>
<div class="a" style="left:174.5px;top:410.5px;width:297px;height:23px;background:#fff;border:1px solid #c8c8c8"></div>
<div class="t" style="left:175.0px;width:19.7px;text-align:center;top:415.5px;font-size:13px;color:#222"></div>
<div class="t" style="left:194.7px;width:19.7px;text-align:center;top:415.5px;font-size:13px;color:#222">€</div>
<div class="a" style="left:194.7px;top:411px;width:1px;height:22px;background:#5a5a5a"></div>
<div class="t" style="left:214.5px;width:19.7px;text-align:center;top:415.5px;font-size:13px;color:#222">£</div>
<div class="a" style="left:214.5px;top:411px;width:1px;height:22px;background:#5a5a5a"></div>
<div class="t" style="left:234.2px;width:19.7px;text-align:center;top:415.5px;font-size:13px;color:#222">¥</div>
<div class="a" style="left:234.2px;top:411px;width:1px;height:22px;background:#5a5a5a"></div>
<div class="t" style="left:253.9px;width:19.7px;text-align:center;top:415.5px;font-size:13px;color:#222">©</div>
<div class="a" style="left:253.9px;top:411px;width:1px;height:22px;background:#5a5a5a"></div>
<div class="t" style="left:273.6px;width:19.7px;text-align:center;top:415.5px;font-size:8.5px;color:#222">®</div>
<div class="a" style="left:273.6px;top:411px;width:1px;height:22px;background:#5a5a5a"></div>
<div class="t" style="left:293.4px;width:19.7px;text-align:center;top:416px;font-size:8.5px;color:#222;font-weight:bold">™</div>
<div class="a" style="left:293.4px;top:411px;width:1px;height:22px;background:#5a5a5a"></div>
<div class="t" style="left:313.1px;width:19.7px;text-align:center;top:415.5px;font-size:13px;color:#222">±</div>
<div class="a" style="left:313.1px;top:411px;width:1px;height:22px;background:#5a5a5a"></div>
<div class="t" style="left:332.8px;width:19.7px;text-align:center;top:415.5px;font-size:13px;color:#222">≠</div>
<div class="a" style="left:332.8px;top:411px;width:1px;height:22px;background:#5a5a5a"></div>
<div class="t" style="left:352.6px;width:19.7px;text-align:center;top:415.5px;font-size:13px;color:#222">≤</div>
<div class="a" style="left:352.6px;top:411px;width:1px;height:22px;background:#5a5a5a"></div>
<div class="t" style="left:372.3px;width:19.7px;text-align:center;top:415.5px;font-size:13px;color:#222">≥</div>
<div class="a" style="left:372.3px;top:411px;width:1px;height:22px;background:#5a5a5a"></div>
<div class="t" style="left:392.0px;width:19.7px;text-align:center;top:415.5px;font-size:13px;color:#222">÷</div>
<div class="a" style="left:392.0px;top:411px;width:1px;height:22px;background:#5a5a5a"></div>
<div class="t" style="left:411.8px;width:19.7px;text-align:center;top:415.5px;font-size:13px;color:#222">×</div>
<div class="a" style="left:411.8px;top:411px;width:1px;height:22px;background:#5a5a5a"></div>
<div class="t" style="left:431.5px;width:19.7px;text-align:center;top:415.5px;font-size:13px;color:#222">∞</div>
<div class="a" style="left:431.5px;top:411px;width:1px;height:22px;background:#5a5a5a"></div>
<div class="t" style="left:451.2px;width:19.7px;text-align:center;top:415.5px;font-size:13px;color:#222">µ</div>
<div class="a" style="left:451.2px;top:411px;width:1px;height:22px;background:#5a5a5a"></div>

<div class="t" style="left:174px;top:441.7px;font-size:7.1px;color:#333">Unicode name:</div>
<div class="t" style="left:174px;top:454.5px;font-size:7.1px;color:#333">Symbol: 123</div>
<div class="t" style="left:312px;top:448.7px;font-size:7.1px;color:#333"><u>C</u>haracter code:</div>
<div class="a" style="left:364.5px;top:444px;width:33px;height:14px;background:#fff;border:1px solid #bbb"></div>
<div class="t" style="left:366px;top:448.2px;font-size:6.8px;color:#333">123</div>
<div class="t" style="left:405px;top:448.7px;font-size:7.1px;color:#333">fro<u>m</u>:</div>
<div class="a" style="left:424.5px;top:443.5px;width:76px;height:15px;background:#fff;border:1px solid #bbb"></div>
<div class="a" style="left:489.5px;top:444px;width:10.5px;height:14px;background:#e5e5e5;border-left:1px solid #ccc"></div>
<svg class="a" style="left:491px;top:448px" width="8" height="6"><path d="M1 1 L4 4 L7 1" fill="none" stroke="#666" stroke-width="0.9"/></svg>
<div class="t" style="left:427px;top:448.7px;font-size:7.1px;color:#333">Symbol (decimal)</div>
<div class="btn" style="left:373.5px;top:466px;width:60px;height:15px"></div>
<div class="hl" style="left:371px;top:464px;width:64.5px;height:19px"></div>
<div class="t" style="left:371px;width:64.5px;text-align:center;top:472px;font-size:7.1px;color:#222">OK</div>
<div class="btn" style="left:441px;top:466px;width:59.5px;height:15px"></div>
<div class="t" style="left:441px;width:59.5px;text-align:center;top:472px;font-size:7.1px;color:#222">Cancel</div>
<svg class="a" style="left:498px;top:479px" width="8" height="8"><path d="M7 2 L2 7 M7 5 L5 7" stroke="#aaa" stroke-width="0.9"/></svg>

<!-- DEFINE NEW BULLET -->
<div class="dlg" style="left:519.5px;top:145.5px;width:214px;height:251px"></div>
<div class="a" style="left:520.5px;top:146.5px;width:212px;height:20px;background:#fff"></div>
<div class="t" style="left:524.5px;top:153px;font-size:8.2px;color:#a0a0a0">Define New Bullet</div>
<div class="t" style="left:683px;top:151.5px;font-size:9px;color:#999">?</div>
<svg class="a" style="left:711px;top:151.5px" width="10" height="10"><path d="M1.5 1.5 L8.5 8.5 M8.5 1.5 L1.5 8.5" stroke="#aaa" stroke-width="1"/></svg>
<div class="t" style="left:524.5px;top:173.3px;font-size:6.9px;color:#333">Bullet character</div>
<div class="a" style="left:575px;top:175px;width:153px;height:1px;background:#dcdcdc"></div>
<div class="btn" style="left:534px;top:186px;width:56px;height:14px"></div>
<div class="hl" style="left:531px;top:183.5px;width:62px;height:19px"></div>
<div class="t" style="left:531px;width:62px;text-align:center;top:190.3px;font-size:6.9px;color:#222"><u>S</u>ymbol...</div>
<div class="btn" style="left:599px;top:184.5px;width:60px;height:15px"></div>
<div class="t" style="left:599px;width:60px;text-align:center;top:190.3px;font-size:6.9px;color:#222"><u>P</u>icture...</div>
<div class="btn" style="left:667.5px;top:184.5px;width:60px;height:15px"></div>
<div class="t" style="left:667.5px;width:60px;text-align:center;top:190.3px;font-size:6.9px;color:#222"><u>F</u>ont...</div>
<div class="t" style="left:532px;top:205.3px;font-size:6.9px;color:#333">Align<u>m</u>ent:</div>
<div class="a" style="left:532px;top:214.5px;width:100px;height:14px;background:#fff;border:1px solid #c3c3c3"></div>
<div class="a" style="left:621px;top:215px;width:10.5px;height:13px;background:#e5e5e5;border-left:1px solid #ccc"></div>
<svg class="a" style="left:622.5px;top:219px" width="8" height="6"><path d="M1 1 L4 4 L7 1" fill="none" stroke="#888" stroke-width="0.9"/></svg>
<div class="t" style="left:535px;top:219.3px;font-size:6.9px;color:#222">Left</div>
<div class="t" style="left:524.5px;top:237.3px;font-size:6.9px;color:#333">Preview</div>
<div class="a" style="left:553px;top:239px;width:175px;height:1px;background:#dcdcdc"></div>
<div class="a" style="left:532px;top:248px;width:196px;height:116px;background:#fff;border:1px solid #a8a8a8"></div>
<div class="a" style="left:540.5px;top:255.2px;width:183px;height:3px;background:#a6a6a6"></div>
<div class="a" style="left:540.5px;top:266.3px;width:183px;height:3px;background:#a6a6a6"></div>
<div class="a" style="left:585.5px;top:277.5px;width:134px;height:3px;background:#000"></div>
<div class="a" style="left:585.5px;top:288.6px;width:138px;height:3px;background:#000"></div>
<div class="a" style="left:585.5px;top:299.8px;width:134px;height:3px;background:#000"></div>
<div class="a" style="left:585.5px;top:311px;width:138px;height:3px;background:#000"></div>
<div class="a" style="left:585.5px;top:322.2px;width:134px;height:3px;background:#000"></div>
<div class="a" style="left:585.5px;top:333.1px;width:138px;height:3px;background:#000"></div>
<div class="a" style="left:540.5px;top:344.7px;width:183px;height:3px;background:#a6a6a6"></div>
<div class="a" style="left:540.5px;top:356px;width:183px;height:3px;background:#a6a6a6"></div>
<div class="a" style="left:568px;top:277.5px;width:3.4px;height:3.4px;border-radius:50%;background:#000"></div>
<div class="a" style="left:568px;top:299.8px;width:3.4px;height:3.4px;border-radius:50%;background:#000"></div>
<div class="a" style="left:568px;top:322.2px;width:3.4px;height:3.4px;border-radius:50%;background:#000"></div>
<div class="btn" style="left:599px;top:375px;width:61px;height:16px"></div>
<div class="hl" style="left:595.8px;top:372.3px;width:67px;height:22.5px;border-radius:1px"></div>
<div class="t" style="left:596px;width:67px;text-align:center;top:382.3px;font-size:6.9px;color:#222">OK</div>
<div class="btn" style="left:667.5px;top:375px;width:60px;height:16px"></div>
<div class="t" style="left:667.5px;width:60px;text-align:center;top:382.3px;font-size:6.9px;color:#222">Cancel</div>

<!-- ARROW -->
<svg class="a" style="left:0;top:0;pointer-events:none" width="1024" height="548">
 <line x1="91.5" y1="450" x2="208" y2="373.5" stroke="#3d45b9" stroke-width="3.4" stroke-linecap="round"/>
 <path d="M221.6 365 L201.3 370.6 L208.5 381.3 Z" fill="#3d45b9" stroke="#3d45b9" stroke-width="0.8" stroke-linejoin="round"/>
</svg>

<!-- STATUS -->
<div class="a status"></div>
<div class="t st" style="left:6.5px">Page 1 of 1</div>
<div class="t st" style="left:56px">11 words</div>
<svg class="a" style="left:96px;top:537px" width="12" height="10"><rect x="1" y="1" width="6" height="8" fill="none" stroke="#fff" stroke-width="0.8"/><path d="M7 5 L9 7 L11 2" fill="none" stroke="#fff" stroke-width="0.8"/></svg>
<div class="t st" style="left:118px">English (United States)</div>
<svg class="a" style="left:202px;top:537px" width="10" height="10"><rect x="1" y="2" width="8" height="7" fill="none" stroke="#fff" stroke-width="0.8"/><rect x="1" y="2" width="8" height="2" fill="#fff"/></svg>
<svg class="a" style="left:220px;top:536.5px" width="12" height="11"><circle cx="6" cy="5" r="3.8" fill="none" stroke="#fff" stroke-width="1"/><path d="M4 9 L6 11 L8 9" fill="#fff"/></svg>
<div class="t st" style="left:233px">Accessibility: Good to go</div>
<svg class="a" style="left:757px;top:537px" width="12" height="11"><rect x="1" y="1" width="8" height="6" fill="none" stroke="#fff" stroke-width="0.8"/><circle cx="8" cy="8" r="2.5" fill="#fff"/></svg>
<div class="t st" style="left:769px">Display Settings</div>
<svg class="a" style="left:834px;top:537px" width="12" height="11"><rect x="1" y="1" width="4" height="9" fill="none" stroke="#fff" stroke-width="0.8"/><rect x="6" y="1" width="4" height="9" fill="none" stroke="#fff" stroke-width="0.8"/></svg>
<div class="a" style="left:853.3px;top:536px;width:26px;height:12px;background:#193a6c"></div>
<svg class="a" style="left:861px;top:537px" width="12" height="11"><rect x="1.5" y="1.5" width="8" height="9.5" fill="#6f7f99" stroke="#8a98b0" stroke-width="0.8"/></svg>
<svg class="a" style="left:889px;top:537px" width="12" height="11"><rect x="1" y="1" width="9" height="8" fill="none" stroke="#fff" stroke-width="0.8"/><rect x="6" y="6" width="5" height="5" fill="#fff"/></svg>
<div class="a" style="left:912px;top:541.5px;width:5px;height:1px;background:#fff"></div>
<div class="a" style="left:919px;top:541.5px;width:65px;height:1px;background:#fff"></div>
<div class="a" style="left:951px;top:538px;width:3px;height:10px;background:#fff"></div>
<div class="t st" style="left:988.5px;font-size:8px;top:538px">+</div>
<div class="t st" style="left:1002px">100%</div>

</body></html>
